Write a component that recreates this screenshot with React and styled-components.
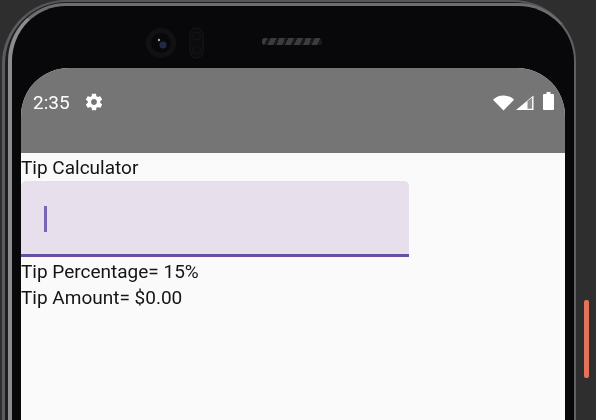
import styled, { createGlobalStyle } from "styled-components";

const GlobalStyle = createGlobalStyle`
  html, body { margin: 0; padding: 0; background: #2e2e2f; }
  #root { width: 596px; height: 420px; overflow: hidden; }
`;

export default function App() {
  return (
    <>
      <GlobalStyle />
      <Page>
        <Shell>
          <Bezel>
            <Sensors>
              <svg width="60" height="44" viewBox="0 0 60 44" aria-hidden="true">
                <circle cx="15" cy="22" r="15" fill="#111113" />
                <circle cx="15" cy="22" r="10" fill="#08080b" />
                <circle cx="17" cy="24" r="3.5" fill="#232a42" />
                <circle cx="13" cy="19" r="1.2" fill="#a4a7b0" />
                <rect x="44" y="7" width="13" height="30" rx="6.5" fill="#0b0b0d" stroke="#18181a" />
                <circle cx="50.5" cy="15" r="4" fill="none" stroke="#151517" />
                <circle cx="50.5" cy="29" r="4" fill="none" stroke="#151517" />
              </svg>
              <Earpiece />
            </Sensors>
            <Screen>
              <StatusBar>
                <Clock>2:35</Clock>
                <GearIcon />
                <StatusRight>
                  <WifiIcon />
                  <SignalIcon />
                  <BatteryIcon />
                </StatusRight>
              </StatusBar>
              <Content>
                <Line>Tip Calculator</Line>
                <Field>
                  <Caret />
                </Field>
                <Line>Tip Percentage= 15%</Line>
                <Line>Tip Amount= $0.00</Line>
              </Content>
            </Screen>
          </Bezel>
          <PowerButton />
        </Shell>
      </Page>
    </>
  );
}

function GearIcon() {
  return (
    <GearSvg viewBox="0 0 24 24" fill="#fff" aria-hidden="true">
      <path d="M19.4 13c.04-.32.1-.66.1-1s-.06-.68-.1-1l2.1-1.65c.2-.15.25-.42.12-.64l-2-3.46c-.12-.22-.39-.3-.61-.22l-2.49 1c-.52-.4-1.08-.73-1.69-.98l-.38-2.65C14.46 2.18 14.25 2 14 2h-4c-.25 0-.46.18-.49.42l-.38 2.65c-.61.25-1.17.59-1.69.98l-2.49-1c-.23-.09-.49 0-.61.22l-2 3.46c-.13.22-.07.49.12.64L4.6 11c-.04.32-.1.66-.1 1s.06.68.1 1l-2.1 1.65c-.2.15-.25.42-.12.64l2 3.46c.12.22.39.3.61.22l2.49-1c.52.4 1.08.73 1.69.98l.38 2.65c.03.24.24.42.49.42h4c.25 0 .46-.18.49-.42l.38-2.65c.61-.25 1.17-.59 1.69-.98l2.49 1c.23.09.49 0 .61-.22l2-3.46c.12-.22.07-.49-.12-.64L19.4 13zM12 15.5c-1.93 0-3.5-1.57-3.5-3.5s1.57-3.5 3.5-3.5 3.5 1.57 3.5 3.5-1.57 3.5-3.5 3.5z" />
    </GearSvg>
  );
}

function WifiIcon() {
  return (
    <svg width="21" height="16" viewBox="0 0 21 16" aria-hidden="true">
      <path d="M0 4.8C2.8 1.8 6.5.4 10.5.4S18.2 1.8 21 4.8L10.5 15.6z" fill="#fff" />
    </svg>
  );
}

function SignalIcon() {
  return (
    <SignalSvg width="18" height="15" viewBox="0 0 18 15" aria-hidden="true">
      <path d="M0 15 17.5.5V15z" fill="#fff" />
      <path d="M11.5 13.8V6.2l4.6-3.8v11.4z" fill="#8f8f8f" />
    </SignalSvg>
  );
}

function BatteryIcon() {
  return (
    <BatterySvg width="11" height="18" viewBox="0 0 11 18" aria-hidden="true">
      <path d="M3.5 0h4v2H10a1 1 0 0 1 1 1v14a1 1 0 0 1-1 1H1a1 1 0 0 1-1-1V3a1 1 0 0 1 1-1h2.5z" fill="#fff" />
    </BatterySvg>
  );
}

const Page = styled.div`
  height: 420px;
  padding: 0 19px 0 2px;
  box-sizing: border-box;
  background: #2e2e2f;
  filter: blur(0.35px);
`;

const Shell = styled.div`
  position: relative;
  height: 420px;
  box-sizing: border-box;
  padding: 1px 0 0 3px;
  border-style: solid;
  border-width: 2px 1px 0 3px;
  border-color: #565658 #2e2e2f #5c5c5e #5c5c5e;
  border-radius: 64px 64px 0 0;
  background: #1e1e20;
`;

const Bezel = styled.div`
  height: 100%;
  box-sizing: border-box;
  padding: 0 9px;
  display: flex;
  flex-direction: column;
  border-style: solid;
  border-width: 3px 2px 0 4px;
  border-color: #6e6e70 #606062 #8c8c8e #8c8c8e;
  border-radius: 58px 58px 0 0;
  background: #08080a;
`;

const Sensors = styled.div`
  height: 62px;
  flex: none;
  box-sizing: border-box;
  padding: 12px 0 0 125px;
  display: flex;
  align-items: center;
`;

const Earpiece = styled.div`
  width: 60px;
  height: 7px;
  margin: -3px 0 0 56px;
  border-radius: 3px;
  background: repeating-linear-gradient(115deg, #3c3c3e 0 5px, #18181a 5px 8px);
`;

const Screen = styled.div`
  flex: 1;
  display: flex;
  flex-direction: column;
  border-radius: 48px 48px 0 0;
  overflow: hidden;
  background: #fafafa;
`;

const StatusBar = styled.div`
  height: 85px;
  flex: none;
  box-sizing: border-box;
  padding: 24px 11px 0 12px;
  display: flex;
  align-items: flex-start;
  background: #757575;
  color: #fff;
`;

const Clock = styled.span`
  font: 19px/22px Roboto, "Liberation Sans", sans-serif;
`;

const GearSvg = styled.svg`
  width: 20px;
  height: 20px;
  margin-left: 14px;
`;

const StatusRight = styled.div`
  margin-left: auto;
  padding-top: 3px;
  display: flex;
  align-items: flex-start;
`;

const SignalSvg = styled.svg`
  margin-left: 2px;
`;

const BatterySvg = styled.svg`
  margin: -3px 0 0 9px;
`;

const Content = styled.div`
  flex: 1;
  padding-top: 2px;
  font: 19px/26px Roboto, "Liberation Sans", sans-serif;
  color: #141414;
`;

const Line = styled.div`
  white-space: nowrap;
`;

const Field = styled.div`
  width: 388px;
  height: 76px;
  margin-bottom: 2px;
  box-sizing: border-box;
  padding: 25px 0 0 23px;
  background: #e7e0ec;
  border-bottom: 3px solid #6750a4;
  border-radius: 5px 5px 0 0;
`;

const Caret = styled.div`
  width: 3px;
  height: 26px;
  background: #7a64b8;
`;

const PowerButton = styled.div`
  position: absolute;
  left: 579px;
  top: 298px;
  width: 5px;
  height: 78px;
  border-radius: 2px;
  background: #e4735a;
`;
